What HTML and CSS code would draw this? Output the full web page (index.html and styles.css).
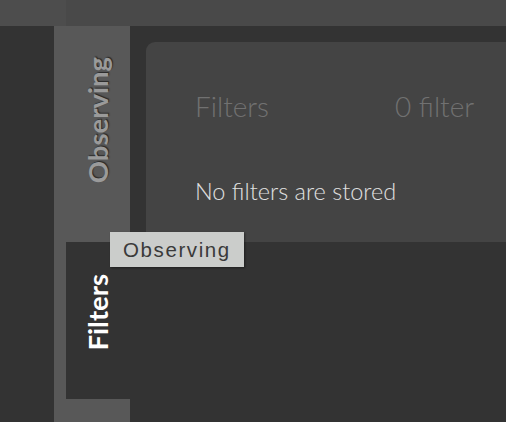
FILE: index.html
```html
<!DOCTYPE html>
<html lang="en">
<head>
<meta charset="utf-8">
<title>Filters</title>
<link rel="stylesheet" href="styles.css">
</head>
<body>
<div class="app">
  <header class="topbar">
    <div class="topbar-left"></div>
    <div class="topbar-right"></div>
  </header>
  <div class="body">
    <aside class="rail"></aside>
    <nav class="tabs">
      <div class="tab tab-observing"><span class="tab-label">Observing</span></div>
      <div class="tab tab-filters active"><span class="tab-label">Filters</span></div>
    </nav>
    <main class="main">
      <section class="card">
        <div class="card-head">
          <h2 class="card-title">Filters</h2>
          <span class="card-count">0 filter</span>
        </div>
        <p class="card-empty">No filters are stored</p>
      </section>
    </main>
  </div>
  <div class="tooltip">Observing</div>
</div>
</body>
</html>
```
FILE: styles.css
```css
html, body {
  margin: 0;
  padding: 0;
  width: 506px;
  height: 422px;
  overflow: hidden;
  background: #333333;
}

.app {
  position: relative;
  width: 506px;
  height: 422px;
  display: grid;
  grid-template-rows: 26px 1fr;
  font-family: "Lato", "Open Sans", sans-serif;
}

.topbar {
  display: flex;
}

.topbar-left {
  width: 66px;
  background: #4d4d4d;
}

.topbar-right {
  flex: 1;
  background: #494949;
}

.body {
  display: flex;
  min-height: 0;
}

.rail {
  width: 54px;
  background: #333333;
}

.tabs {
  width: 64px;
  padding-left: 12px;
  background: #585858;
  display: flex;
  flex-direction: column;
}

.tab {
  display: flex;
  flex-direction: column;
  align-items: center;
  box-sizing: border-box;
}

.tab-observing {
  height: 216px;
  padding-top: 31px;
}

.tab-filters {
  height: 157px;
  padding-top: 32px;
}

.tab.active {
  background: #333333;
}

.tab-label {
  writing-mode: vertical-rl;
  transform: rotate(180deg);
  font-size: 27.5px;
  font-weight: 700;
  line-height: 1;
  color: #9a9a9a;
  text-shadow: 1px 1px 1px #2a2a2a;
}

.tab.active .tab-label {
  color: #ffffff;
  text-shadow: none;
}

.main {
  flex: 1;
  padding: 16px 0 0 16px;
  min-width: 0;
  overflow: hidden;
}

.card {
  height: 200px;
  box-sizing: border-box;
  background: #444444;
  border-radius: 9px 0 0 9px;
  padding: 48px 0 0 49px;
}

.card-head {
  display: grid;
  grid-template-columns: 200px auto;
  align-items: baseline;
}

.card-title {
  margin: 0;
  font-size: 28px;
  font-weight: 300;
  color: #717171;
  line-height: 1.2;
}

.card-count {
  font-size: 28px;
  font-weight: 300;
  color: #717171;
  line-height: 1.2;
  white-space: nowrap;
}

.card-empty {
  margin: 53px 0 0;
  font-size: 23.5px;
  font-weight: 300;
  color: #e0e0e0;
  line-height: 1.2;
  white-space: nowrap;
}

.tooltip {
  position: absolute;
  left: 110px;
  top: 232px;
  width: 134px;
  height: 35px;
  box-sizing: border-box;
  padding-left: 13px;
  background: #cbcdcb;
  color: #3a3a3a;
  font-family: "Liberation Sans", Arial, sans-serif;
  font-size: 20.5px;
  letter-spacing: 1.6px;
  line-height: 35px;
  box-shadow: 1px 1px 2px rgba(0, 0, 0, 0.4);
}
```
